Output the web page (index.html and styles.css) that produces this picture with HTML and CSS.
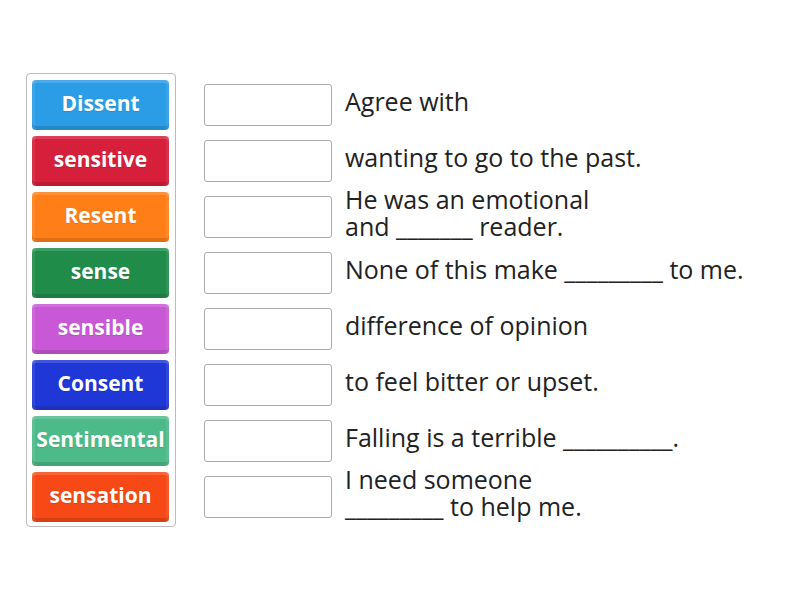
FILE: index.html
```html
<!DOCTYPE html>
<html lang="en">
<head>
    <title>Match up</title>
    <link rel="stylesheet" href="styles.css">
</head>
<body>
    <div class="board">
        <!-- Word tiles -->
        <div class="tray">
            <div class="tile blue">Dissent</div>
            <div class="tile red">sensitive</div>
            <div class="tile orange">Resent</div>
            <div class="tile green">sense</div>
            <div class="tile pink">sensible</div>
            <div class="tile navy">Consent</div>
            <div class="tile mint">Sentimental</div>
            <div class="tile flame">sensation</div>
        </div>

        <!-- Clues -->
        <div class="clues">
            <div class="row"><div class="slot"></div><p>Agree with</p></div>
            <div class="row"><div class="slot"></div><p>wanting to go to the past.</p></div>
            <div class="row"><div class="slot"></div><p>He was an emotional<br>and _______ reader.</p></div>
            <div class="row"><div class="slot"></div><p>None of this make _________ to me.</p></div>
            <div class="row"><div class="slot"></div><p>difference of opinion</p></div>
            <div class="row"><div class="slot"></div><p>to feel bitter or upset.</p></div>
            <div class="row"><div class="slot"></div><p>Falling is a terrible __________.</p></div>
            <div class="row"><div class="slot"></div><p>I need someone<br>_________ to help me.</p></div>
        </div>
    </div>
</body>
</html>
```

FILE: styles.css
```css
body {
    margin: 0;
    font-family: 'Open Sans', sans-serif;
    background: #ffffff;
    color: #222222;
}

.board {
    display: flex;
    align-items: flex-start;
    padding: 73px 0 0 26px;
}

.tray {
    width: 150px;
    box-sizing: border-box;
    border: 1px solid #bbbbbb;
    border-radius: 4px;
    padding: 6px 6px 4px 5px;
    display: flex;
    flex-direction: column;
    gap: 6px;
}

.tile {
    height: 50px;
    box-sizing: border-box;
    padding-bottom: 4px;
    border-radius: 4px;
    display: flex;
    align-items: center;
    justify-content: center;
    color: #ffffff;
    font-size: 21px;
    font-weight: 700;
    white-space: nowrap;
    box-shadow: inset 0 3px 0 rgba(255, 255, 255, 0.15), inset 3px 0 0 rgba(255, 255, 255, 0.08), inset -3px 0 0 rgba(255, 255, 255, 0.08), inset 0 -4px 0 rgba(0, 0, 0, 0.12);
    text-shadow: 0 1px 1px rgba(0, 0, 0, 0.1);
}

.blue { background: #2a9de6; }
.red { background: #d61f3a; }
.orange { background: #ff7e17; }
.green { background: #1f8c49; }
.pink { background: #c958d6; }
.navy { background: #2037d8; }
.mint { background: #4cbb89; }
.flame { background: #f64915; }

.clues {
    display: flex;
    flex-direction: column;
    gap: 6px;
    padding: 7px 0 0 28px;
}

.row {
    height: 50px;
    display: flex;
    align-items: center;
}

.slot {
    width: 128px;
    height: 42px;
    box-sizing: border-box;
    border: 1px solid #aaaaaa;
    border-radius: 3px;
    background: #ffffff;
    flex-shrink: 0;
}

.row p {
    margin: 0 0 0 13px;
    padding-bottom: 8px;
    font-size: 25px;
    line-height: 27px;
    white-space: nowrap;
}
```
